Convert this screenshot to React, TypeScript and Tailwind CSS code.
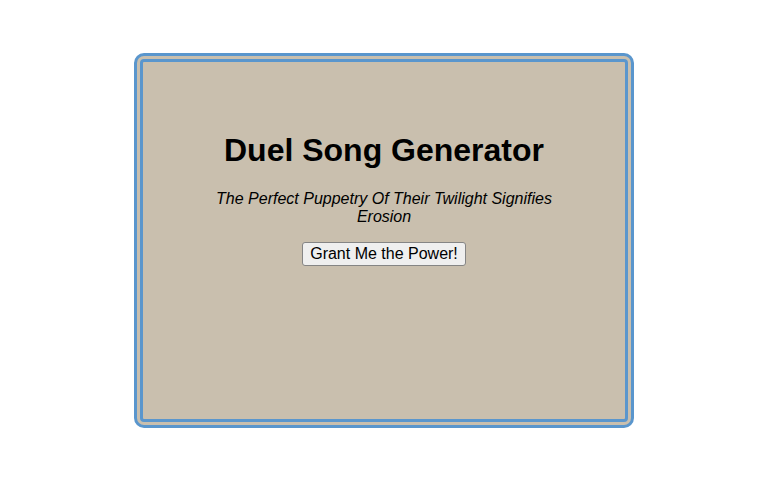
export default function App() {
  return (
    <div className="w-[768px] h-[480px] bg-white pt-[53px]" style={{ fontFamily: '"Liberation Sans", Arial, sans-serif' }}>
      <div className="w-[500px] h-[375px] mx-auto border-[9px] border-double border-[#5a96cd] rounded-[10px] bg-[#c9bfae] flex flex-col items-center pt-[70px] text-black">
        <h1 className="text-[32px] font-bold leading-[37px]">Duel Song Generator</h1>
        <p className="mt-[21px] w-[360px] text-center italic text-[16px] leading-[18px]">
          The Perfect Puppetry Of Their Twilight Signifies Erosion
        </p>
        <button className="mt-[16px] h-[24px] px-[7px] text-[16px] leading-[18px] bg-[#efefef] border border-[#858585] rounded-[3px] text-black">
          Grant Me the Power!
        </button>
      </div>
    </div>
  );
}
